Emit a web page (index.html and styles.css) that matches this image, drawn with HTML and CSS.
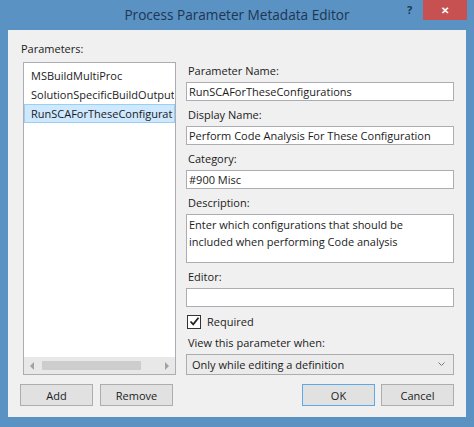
FILE: index.html
```html
<!DOCTYPE html>
<html lang="en">
<head>
  <meta charset="UTF-8" />
  <title>Process Parameter Metadata Editor</title>
  <link rel="stylesheet" href="styles.css">
</head>
<body>

  <div class="window">

    <!-- Title bar -->
    <div class="title-bar">
      <span class="title">Process Parameter Metadata Editor</span>
      <span class="help">?</span>
      <span class="close">&#x2715;</span>
    </div>

    <!-- Client area -->
    <div class="client">
      <div class="list-label">Parameters:</div>

      <div class="main">
        <!-- Parameter list -->
        <div class="listbox">
          <div class="items">
            <div class="item">MSBuildMultiProc</div>
            <div class="item">SolutionSpecificBuildOutput</div>
            <div class="item selected">RunSCAForTheseConfigurat</div>
          </div>
          <div class="hscroll">
            <span class="arrow left"></span>
            <span class="thumb"></span>
            <span class="arrow right"></span>
          </div>
        </div>

        <!-- Details form -->
        <div class="form">
          <label class="field-label">Parameter Name:</label>
          <div class="input">RunSCAForTheseConfigurations</div>

          <label class="field-label">Display Name:</label>
          <div class="input">Perform Code Analysis For These Configuration</div>

          <label class="field-label">Category:</label>
          <div class="input">#900 Misc</div>

          <label class="field-label">Description:</label>
          <div class="input textarea">Enter which configurations that should be included when performing Code analysis</div>

          <label class="field-label">Editor:</label>
          <div class="input"></div>

          <div class="check-row">
            <span class="checkbox">
              <svg width="11" height="11" viewBox="0 0 11 11"><path d="M1.5 5.5 L4.2 8.3 L9.5 1.8" fill="none" stroke="#222" stroke-width="1.8"/></svg>
            </span>
            <span>Required</span>
          </div>

          <label class="field-label">View this parameter when:</label>
          <div class="select">
            <span>Only while editing a definition</span>
            <svg width="7" height="5" viewBox="0 0 7 5"><path d="M0.5 0.5 L3.5 3.5 L6.5 0.5" fill="none" stroke="#777" stroke-width="1"/></svg>
          </div>
        </div>
      </div>

      <!-- Buttons -->
      <div class="buttons">
        <button class="btn">Add</button>
        <button class="btn">Remove</button>
        <div class="spacer"></div>
        <button class="btn default">OK</button>
        <button class="btn">Cancel</button>
      </div>
    </div>

  </div>

</body>
</html>
```

FILE: styles.css
```css
* {
  margin: 0;
  padding: 0;
  box-sizing: border-box;
}

body {
  font-family: 'Open Sans', 'Noto Sans', sans-serif;
  font-size: 11px;
  color: #1b1b1b;
  background: #5a92c3;
}

.window {
  width: 474px;
  height: 427px;
  background: #5a92c3;
  display: flex;
  flex-direction: column;
  padding: 0 8px 10px 8px;
}

/* Title bar */
.title-bar {
  height: 30px;
  display: flex;
  justify-content: center;
  position: relative;
}

.title {
  margin-top: 5px;
  font-size: 13.6px;
  color: #1e3652;
}

.help {
  position: absolute;
  left: 399px;
  top: 2px;
  font-size: 11px;
  font-weight: bold;
  color: #1e3652;
}

.close {
  position: absolute;
  left: 415px;
  top: 0;
  width: 44px;
  height: 20px;
  background: #c75050;
  color: #fff;
  font-size: 10px;
  font-weight: bold;
  display: flex;
  align-items: center;
  justify-content: center;
}

/* Client area */
.client {
  flex: 1;
  background: #f0f0f0;
  display: flex;
  flex-direction: column;
  padding: 11px 12px 11px 12px;
}

.list-label {
  height: 16px;
  line-height: 16px;
  margin-left: 1px;
  margin-bottom: 5px;
}

.main {
  height: 313px;
  display: flex;
  gap: 10px;
}

.listbox {
  width: 153px;
  margin-left: 3px;
  background: #fff;
  border: 1px solid #abadb3;
  display: flex;
  flex-direction: column;
  overflow: hidden;
}

.items {
  flex: 1;
  padding-top: 3px;
}

.item {
  height: 19px;
  line-height: 17px;
  padding-left: 6px;
  white-space: nowrap;
  overflow: hidden;
  border: 1px solid transparent;
}

.item.selected {
  background: #cde8ff;
  border-color: #9ccfee;
}

.hscroll {
  height: 17px;
  background: #e8e8e8;
  display: flex;
  align-items: center;
  padding: 0 6px;
  gap: 5px;
}

.thumb {
  width: 99px;
  height: 9px;
  background: #cdcdcd;
  margin-left: 3px;
}

.arrow {
  width: 0;
  height: 0;
  border-top: 4px solid transparent;
  border-bottom: 4px solid transparent;
}

.arrow.left {
  border-right: 4px solid #a2a2a2;
}

.arrow.right {
  border-left: 4px solid #a2a2a2;
  margin-left: auto;
}

/* Form */
.form {
  flex: 1;
  display: flex;
  flex-direction: column;
  padding-top: 1px;
}

.field-label {
  height: 16px;
  line-height: 16px;
  margin-left: 2px;
  margin-bottom: 3px;
}

.input {
  height: 19px;
  background: #fff;
  border: 1px solid #abadb3;
  padding: 0 2px;
  line-height: 17px;
  white-space: nowrap;
  overflow: hidden;
  margin-bottom: 6px;
}

.input.textarea {
  height: 49px;
  white-space: normal;
  padding-top: 1px;
  padding-right: 40px;
}

.check-row {
  height: 17px;
  display: flex;
  align-items: center;
  gap: 6px;
  margin-left: 1px;
  margin-bottom: 5px;
}

.checkbox {
  width: 14px;
  height: 14px;
  border: 1px solid #333;
  background: #fff;
  display: flex;
  align-items: center;
  justify-content: center;
}

.select {
  height: 21px;
  background: #ebebeb;
  border: 1px solid #acacac;
  display: flex;
  align-items: center;
  justify-content: space-between;
  padding: 0 8px 0 5px;
}

/* Buttons */
.buttons {
  display: flex;
  gap: 7px;
  margin-top: 9px;
}

.spacer {
  flex: 1;
}

.btn {
  width: 73px;
  height: 22px;
  font-family: inherit;
  font-size: 11px;
  color: #1b1b1b;
  background: #e1e1e1;
  border: 1px solid #adadad;
}

.btn.default {
  border-color: #5fa8e8;
  margin-right: -1px;
}
```
